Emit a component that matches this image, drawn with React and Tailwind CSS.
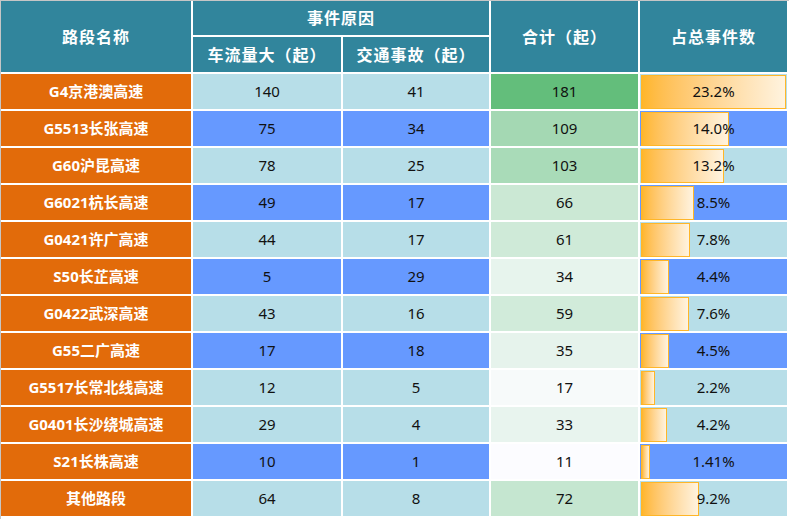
import React from 'react'

const LIGHT = 'bg-[#b7dee8]'
const BLUE = 'bg-[#6699ff]'

// 路段事件统计
const rows = [
  { name: 'G4京港澳高速', flow: 140, accident: 41, total: 181, pct: 23.2, label: '23.2%', tone: LIGHT, green: 'bg-[#63be7b]' },
  { name: 'G5513长张高速', flow: 75, accident: 34, total: 109, pct: 14.0, label: '14.0%', tone: BLUE, green: 'bg-[#a4d8b3]' },
  { name: 'G60沪昆高速', flow: 78, accident: 25, total: 103, pct: 13.2, label: '13.2%', tone: LIGHT, green: 'bg-[#a9dbb8]' },
  { name: 'G6021杭长高速', flow: 49, accident: 17, total: 66, pct: 8.5, label: '8.5%', tone: BLUE, green: 'bg-[#cbe8d4]' },
  { name: 'G0421许广高速', flow: 44, accident: 17, total: 61, pct: 7.8, label: '7.8%', tone: LIGHT, green: 'bg-[#cfead8]' },
  { name: 'S50长芷高速', flow: 5, accident: 29, total: 34, pct: 4.4, label: '4.4%', tone: BLUE, green: 'bg-[#e7f4ed]' },
  { name: 'G0422武深高速', flow: 43, accident: 16, total: 59, pct: 7.6, label: '7.6%', tone: LIGHT, green: 'bg-[#d1ebda]' },
  { name: 'G55二广高速', flow: 17, accident: 18, total: 35, pct: 4.5, label: '4.5%', tone: BLUE, green: 'bg-[#e6f3ec]' },
  { name: 'G5517长常北线高速', flow: 12, accident: 5, total: 17, pct: 2.2, label: '2.2%', tone: LIGHT, green: 'bg-[#f7fafa]' },
  { name: 'G0401长沙绕城高速', flow: 29, accident: 4, total: 33, pct: 4.2, label: '4.2%', tone: LIGHT, green: 'bg-[#e8f4ee]' },
  { name: 'S21长株高速', flow: 10, accident: 1, total: 11, pct: 1.41, label: '1.41%', tone: BLUE, green: 'bg-[#fcfcff]' },
  { name: '其他路段', flow: 64, accident: 8, total: 72, pct: 9.2, label: '9.2%', tone: LIGHT, green: 'bg-[#c5e6d0]' },
]

const MAX_PCT = 23.2
const head = 'bg-[#31859c] text-white font-bold text-[16px] tracking-[1px] flex items-center justify-center'
const cell = 'flex items-center justify-center text-[15px] text-[#111]'

export default function App() {
  return (
    <div className="w-[789px] h-[519px] overflow-hidden bg-white border-t border-l border-[#c6c6c6]" style={{ fontFamily: '"Noto Sans", "Noto Sans CJK SC", sans-serif' }}>
      <div className="grid grid-cols-[190px_148px_146px_147px_147px] grid-rows-[34px_35px] auto-rows-[35px] gap-[2px]">
        <div className={`${head} row-span-2`}>路段名称</div>
        <div className={`${head} col-span-2`}>事件原因</div>
        <div className={`${head} row-span-2`}>合计（起）</div>
        <div className={`${head} row-span-2`}>占总事件数</div>
        <div className={head}>车流量大（起）</div>
        <div className={head}>交通事故（起）</div>

        {rows.map((r) => (
          <React.Fragment key={r.name}>
            <div className="bg-[#e26b0a] text-white font-bold text-[15px] flex items-center justify-center">{r.name}</div>
            <div className={`${cell} ${r.tone}`}>{r.flow}</div>
            <div className={`${cell} ${r.tone}`}>{r.accident}</div>
            <div className={`${cell} ${r.green}`}>{r.total}</div>
            <div className={`${cell} ${r.tone} relative`}>
              {/* data bar */}
              <div className="absolute left-[1px] top-[1px] bottom-0 right-[1px]">
                <div
                  className="h-full border border-[#ffb628] bg-linear-to-r from-[#ffb628] to-[#fff3df]"
                  style={{ width: `${(r.pct / MAX_PCT) * 100}%` }}
                />
              </div>
              <span className="relative">{r.label}</span>
            </div>
          </React.Fragment>
        ))}
      </div>
    </div>
  )
}
